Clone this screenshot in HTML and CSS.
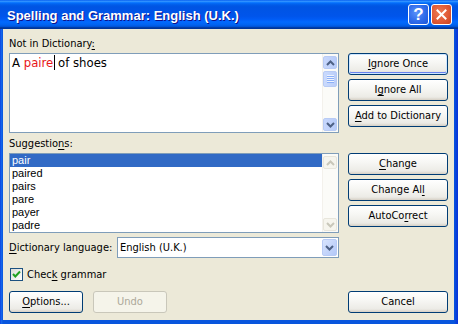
FILE: index.html
```html
<!DOCTYPE html>
<html>
<head>
<meta charset="utf-8">
<title>Spelling and Grammar</title>
<link rel="stylesheet" href="styles.css">
</head>
<body>
<div class="window">
  <div class="titlebar">
    <span class="title">Spelling and Grammar: English (U.K.)</span>
    <div class="tb-btns">
      <span class="tb-btn help">?</span>
      <span class="tb-btn close">
        <svg width="13" height="13" viewBox="0 0 13 13"><path d="M2.5 2.5 L10.5 10.5 M10.5 2.5 L2.5 10.5" stroke="#fff" stroke-width="2" stroke-linecap="square"/></svg>
      </span>
    </div>
  </div>
  <div class="client">
    <div class="label top-label">Not in Dictionary<u>:</u></div>
    <div class="row">
      <div class="box textbox">
        <div class="box-text">A <span class="err">paire</span><span class="caret"></span> of shoes</div>
        <div class="vscroll">
          <span class="sb-btn"><svg width="9" height="6" viewBox="0 0 9 6"><path d="M1 5 L4.5 1.5 L8 5" fill="none" stroke="#4D6185" stroke-width="2"/></svg></span>
          <span class="sb-thumb"><i></i><i></i><i></i><i></i></span>
          <span class="sb-track"></span>
          <span class="sb-btn"><svg width="9" height="6" viewBox="0 0 9 6"><path d="M1 1 L4.5 4.5 L8 1" fill="none" stroke="#4D6185" stroke-width="2"/></svg></span>
        </div>
      </div>
      <div class="btn-col">
        <button class="btn default"><u>I</u>gnore Once</button>
        <button class="btn">I<u>g</u>nore All</button>
        <button class="btn"><u>A</u>dd to Dictionary</button>
      </div>
    </div>
    <div class="label mid-label">Suggestio<u>n</u>s:</div>
    <div class="row">
      <div class="box listbox">
        <ul class="items">
          <li class="sel">pair</li>
          <li>paired</li>
          <li>pairs</li>
          <li>pare</li>
          <li>payer</li>
          <li>padre</li>
        </ul>
        <div class="vscroll disabled">
          <span class="sb-btn"><svg width="9" height="6" viewBox="0 0 9 6"><path d="M1 5 L4.5 1.5 L8 5" fill="none" stroke="#C9C7BA" stroke-width="2"/></svg></span>
          <span class="sb-track"></span>
          <span class="sb-btn"><svg width="9" height="6" viewBox="0 0 9 6"><path d="M1 1 L4.5 4.5 L8 1" fill="none" stroke="#C9C7BA" stroke-width="2"/></svg></span>
        </div>
      </div>
      <div class="btn-col">
        <button class="btn"><u>C</u>hange</button>
        <button class="btn">Change A<span>l</span><u>l</u></button>
        <button class="btn">AutoCo<u>r</u>rect</button>
      </div>
    </div>
    <div class="lang-row">
      <span class="label"><u>D</u>ictionary language:</span>
      <div class="combo">
        <span class="combo-text">English (U.K.)</span>
        <span class="combo-btn"><svg width="9" height="6" viewBox="0 0 9 6"><path d="M1 1 L4.5 4.5 L8 1" fill="none" stroke="#4D6185" stroke-width="2"/></svg></span>
      </div>
    </div>
    <label class="check-row">
      <span class="checkbox"><svg width="11" height="11" viewBox="0 0 11 11"><path d="M2 5 L4.3 7.5 L9 2.5" fill="none" stroke="#21A121" stroke-width="2"/></svg></span>
      <span>Chec<u>k</u> grammar</span>
    </label>
    <div class="bottom-row">
      <button class="btn small"><u>O</u>ptions...</button>
      <button class="btn small" disabled>Undo</button>
      <span class="spacer"></span>
      <button class="btn">Cancel</button>
    </div>
  </div>
</div>
</body>
</html>
```

FILE: styles.css
```css
* { box-sizing: border-box; }
html, body { margin: 0; padding: 0; }
body {
  width: 458px;
  height: 324px;
  overflow: hidden;
  font-family: "DejaVu Sans Condensed", "DejaVu Sans", sans-serif;
  font-size: 11px;
  color: #000;
}
u { text-decoration: underline; text-underline-offset: 2px; text-decoration-thickness: 1px; }

.window {
  width: 458px;
  height: 324px;
  display: flex;
  flex-direction: column;
  background: linear-gradient(to right, #0831D9 0, #166AEE 1px, #0855DD 3px, #0855DD calc(100% - 4px), #0831D9 100%);
}

.titlebar {
  height: 29px;
  flex: none;
  display: flex;
  align-items: center;
  padding: 0 6px 0 7px;
  background: linear-gradient(to bottom, #0058EE 0%, #3593FF 4%, #288EFF 6%, #127DFF 8%, #036FFC 10%, #0262EE 14%, #0057E5 20%, #0054E3 24%, #0055EB 56%, #005BF5 66%, #026AFE 76%, #0062EF 86%, #0052D6 92%, #0040AB 94%, #003092 100%);
}
.title {
  flex: 1;
  font-family: "Liberation Sans", Arial, sans-serif;
  font-weight: bold;
  font-size: 13px;
  color: #fff;
  text-shadow: 1px 1px #0F1089;
  padding-top: 1px;
}
.tb-btns { display: flex; gap: 2px; }
.tb-btn {
  width: 21px;
  height: 21px;
  border: 1px solid #fff;
  border-radius: 3px;
  display: flex;
  align-items: center;
  justify-content: center;
  color: #fff;
}
.help {
  background: radial-gradient(circle at 40% 40%, #5B92FA 0, #2F6BEA 55%, #1C55D8 100%);
  font-family: "Liberation Sans", Arial, sans-serif;
  font-weight: bold;
  font-size: 17px;
  line-height: 19px;
}
.close {
  background: radial-gradient(circle at 40% 40%, #EE7B55 0, #E05A36 55%, #C8411E 100%);
}

.client {
  flex: 1;
  margin: 0 4px 4px 3px;
  background: #ECE9D8;
  padding: 8px 6px 0 6px;
  display: flex;
  flex-direction: column;
}

.label { line-height: 13px; white-space: nowrap; }
.top-label { height: 16px; }
.mid-label { height: 20px; padding-top: 4px; }

.row { display: flex; gap: 9px; }
.box {
  width: 330px;
  height: 80px;
  border: 1px solid #7F9DB9;
  background: #fff;
  display: flex;
}
.box-text {
  flex: 1;
  font-size: 13px;
  line-height: 16px;
  padding: 1px 0 0 2px;
  color: #000;
  white-space: nowrap;
}
.err { color: #E8161B; }
.caret {
  display: inline-block;
  width: 1px;
  height: 15px;
  background: #000;
  vertical-align: -3px;
  margin: 0 -1px 0 1px;
}

.vscroll {
  width: 16px;
  flex: none;
  display: flex;
  flex-direction: column;
  background: #FBFBF8;
  border-left: 1px solid #F3F1EC;
  padding: 2px 1px 1px 0;
  gap: 2px;
}
.sb-btn {
  height: 13px;
  flex: none;
  border: 1px solid #B8CBF5;
  border-radius: 2px;
  background: linear-gradient(to right, #C7D7FC, #B8CCF9);
  display: flex;
  align-items: center;
  justify-content: center;
}
.sb-thumb {
  height: 16px;
  flex: none;
  border: 1px solid #B8CBF5;
  border-radius: 2px;
  background: linear-gradient(to right, #CADAFD, #BBCEF9);
  display: flex;
  flex-direction: column;
  align-items: center;
  justify-content: center;
  gap: 1px;
}
.sb-thumb i { display: block; width: 7px; height: 2px; background: #EEF3FE; border-bottom: 1px solid #8CB0F8; margin-top: -1px; }
.sb-track { flex: 1; }
.vscroll.disabled .sb-btn {
  border-color: #E8E6DC;
  background: #F6F5EE;
}

.listbox .items {
  flex: 1;
  list-style: none;
  margin: 0;
  padding: 0;
  font-family: "Liberation Sans", Arial, sans-serif;
  font-size: 11px;
}
.items li {
  height: 13px;
  line-height: 13px;
  padding-left: 2px;
}
.items li.sel { background: #316AC5; color: #fff; }

.btn-col { display: flex; flex-direction: column; gap: 4px; }
.btn {
  width: 100px;
  height: 22px;
  padding: 0;
  border: 1px solid #003C74;
  border-radius: 3px;
  background: linear-gradient(to bottom, #FFFFFF 0%, #F7F7F4 40%, #ECEBE6 85%, #D6D0C5 100%);
  font-family: inherit;
  font-size: 11px;
  color: #000;
  text-align: center;
  line-height: 18px;
}
.btn.default { box-shadow: inset 0 0 0 1px #CEE7FF, inset 0 -1px 0 1px #6982EE; }
.btn.small { width: 74px; }
.btn:disabled {
  border-color: #C9C7BA;
  background: #F5F4EA;
  color: #ACA899;
}

.lang-row {
  display: flex;
  align-items: center;
  margin-top: 4px;
  height: 21px;
}
.lang-row .label { width: 108px; }
.combo {
  width: 222px;
  height: 21px;
  border: 1px solid #7F9DB9;
  background: #fff;
  display: flex;
  align-items: center;
}
.combo-text { flex: 1; padding-left: 2px; }
.combo-btn {
  width: 15px;
  height: 17px;
  margin-right: 1px;
  border: 1px solid #B8CBF5;
  border-radius: 2px;
  background: linear-gradient(to bottom right, #D8E4FD, #B3C8F8);
  display: flex;
  align-items: center;
  justify-content: center;
}

.check-row {
  display: flex;
  align-items: center;
  gap: 4px;
  margin-top: 10px;
  height: 13px;
  padding-left: 1px;
}
.checkbox {
  width: 13px;
  height: 13px;
  border: 1px solid #1C5180;
  background: linear-gradient(to bottom right, #DCDCD7, #FFFFFF);
  display: flex;
  align-items: center;
  justify-content: center;
}

.bottom-row {
  display: flex;
  gap: 10px;
  margin-top: 10px;
}
.spacer { flex: 1; }
```
